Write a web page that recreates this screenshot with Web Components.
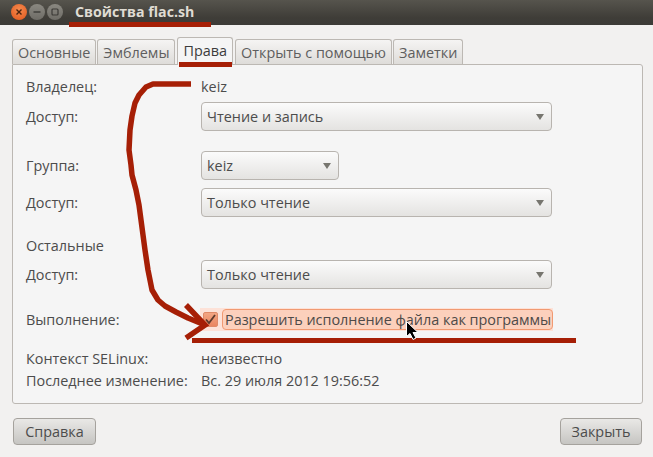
<!DOCTYPE html>
<html lang="ru">
<head>
<meta charset="utf-8">
<title>Свойства flac.sh</title>
<style>
  html, body { margin: 0; padding: 0; }
  body {
    background: #f2f1f0;
    color: #4c4c4c;
    font-family: 'Open Sans', 'Noto Sans', sans-serif;
    font-size: 14.4px;
    height: 457px;
    overflow: hidden;
    position: relative;
    width: 653px;
  }
</style>
</head>
<body>
<gtk-titlebar>Свойства flac.sh</gtk-titlebar>

<gtk-tabs>
  <gtk-tab>Основные</gtk-tab>
  <gtk-tab>Эмблемы</gtk-tab>
  <gtk-tab active>Права</gtk-tab>
  <gtk-tab>Открыть с помощью</gtk-tab>
  <gtk-tab>Заметки</gtk-tab>
</gtk-tabs>

<gtk-panel>
  <gtk-row label="Владелец:" height="22" style="margin-top:10px">keiz</gtk-row>
  <gtk-row label="Доступ:" height="29" style="margin-top:5px"><gtk-combo>Чтение и запись</gtk-combo></gtk-row>
  <gtk-row label="Группа:" height="29" style="margin-top:20px"><gtk-combo short>keiz</gtk-combo></gtk-row>
  <gtk-row label="Доступ:" height="29" style="margin-top:8px"><gtk-combo>Только чтение</gtk-combo></gtk-row>
  <gtk-row label="Остальные" height="22" style="margin-top:17px"></gtk-row>
  <gtk-row label="Доступ:" height="29" style="margin-top:4px"><gtk-combo>Только чтение</gtk-combo></gtk-row>
  <gtk-row label="Выполнение:" height="24" style="margin-top:18px"><gtk-check>Разрешить исполнение файла как программы</gtk-check></gtk-row>
  <gtk-row label="Контекст SELinux:" height="22" style="margin-top:16px">неизвестно</gtk-row>
  <gtk-row label="Последнее изменение:" height="22">Вс. 29 июля 2012 19:56:52</gtk-row>
</gtk-panel>

<gtk-actions>
  <gtk-button>Справка</gtk-button>
  <gtk-button style="width:82px">Закрыть</gtk-button>
</gtk-actions>

<gtk-scribble></gtk-scribble>

<script>
class GtkTitlebar extends HTMLElement {
  constructor() {
    super();
    this.attachShadow( {mode: 'open'} ).innerHTML = /* template */ `
      <style>
        :host {
          align-items: center;
          background: linear-gradient( #56544d, #3f3d38 70%, #3c3b37 );
          box-sizing: border-box;
          color: #dfdbd2;
          display: flex;
          font-family: 'Open Sans', 'Noto Sans', sans-serif;
          font-size: 14.2px;
          font-weight: 700;
          height: 25px;
          padding: 0 0 2px 11px;
        }
        .btn {
          align-items: center;
          border-radius: 50%;
          box-sizing: border-box;
          display: flex;
          height: 16px;
          justify-content: center;
          margin-right: 2px;
          width: 16px;
        }
        .close { background: radial-gradient( circle at 50% 35%, #f58a4e, #e0561c ); }
        .other { background: linear-gradient( #8a8881, #6e6c66 ); }
        .title { margin-left: 10px; }
      </style>
      <span class="btn close"><svg width="8" height="8"><path d="M1.5 1.5l5 5M6.5 1.5l-5 5" stroke="#4a2410" stroke-width="1.4"/></svg></span>
      <span class="btn other"><svg width="8" height="8"><path d="M0.5 4h7" stroke="#3c3b37" stroke-width="1.4"/></svg></span>
      <span class="btn other"><svg width="8" height="8"><rect x="1" y="1" width="6" height="6" rx="1" fill="none" stroke="#3c3b37" stroke-width="1.2"/></svg></span>
      <span class="title"><slot></slot></span>
    `;
  }
}

class GtkTabs extends HTMLElement {
  constructor() {
    super();
    this.attachShadow( {mode: 'open'} ).innerHTML = /* template */ `
      <style>
        :host {
          align-items: flex-end;
          display: flex;
          gap: 1px;
          height: 27px;
          margin: 12px 0 0 12px;
          position: relative;
          z-index: 1;
        }
      </style>
      <slot></slot>
    `;
  }
}

class GtkTab extends HTMLElement {
  constructor() {
    super();
    this.attachShadow( {mode: 'open'} ).innerHTML = /* template */ `
      <style>
        :host {
          align-items: center;
          background: linear-gradient( #f5f4f3, #dedcd9 );
          border: 1px solid #bcb8b3;
          border-bottom: 0;
          border-radius: 3px 3px 0 0;
          box-sizing: border-box;
          color: #5e5e5e;
          display: flex;
          height: 25px;
          padding: 0 5px;
          white-space: nowrap;
        }
        :host( [active] ) {
          background: #f5f5f5;
          color: #3c3c3c;
          height: 28px;
          margin: 0 1px;
          margin-bottom: -1px;
          padding: 0 5px 2px;
        }
      </style>
      <slot></slot>
    `;
  }
}

class GtkPanel extends HTMLElement {
  constructor() {
    super();
    this.attachShadow( {mode: 'open'} ).innerHTML = /* template */ `
      <style>
        :host {
          background: #f5f5f5;
          border: 1px solid #bcb8b3;
          border-radius: 0 3px 3px 3px;
          box-sizing: border-box;
          display: block;
          height: 340px;
          margin: 0 10px 0 12px;
          padding: 0 13px;
        }
      </style>
      <slot></slot>
    `;
  }
}

class GtkRow extends HTMLElement {
  constructor() {
    super();
    this.attachShadow( {mode: 'open'} ).innerHTML = /* template */ `
      <style>
        :host {
          align-items: center;
          color: #4c4c4c;
          display: grid;
          grid-template-columns: 175px 1fr;
        }
        .label { white-space: nowrap; }
      </style>
      <span class="label"></span>
      <div><slot></slot></div>
    `;
  }

  connectedCallback() {
    this.shadowRoot.querySelector( '.label' ).textContent = this.getAttribute( 'label' );
    this.style.height = this.getAttribute( 'height' ) + 'px';
  }
}

class GtkCombo extends HTMLElement {
  constructor() {
    super();
    this.attachShadow( {mode: 'open'} ).innerHTML = /* template */ `
      <style>
        :host {
          align-items: center;
          background: linear-gradient( #fbfbfb, #e4e3e1 );
          border: 1px solid #b8b4af;
          border-radius: 4px;
          box-sizing: border-box;
          display: flex;
          height: 29px;
          justify-content: space-between;
          padding: 0 7px 0 5px;
          width: 351px;
        }
        :host( [short] ) { width: 138px; }
        .arrow {
          border-left: 4.5px solid transparent;
          border-right: 4.5px solid transparent;
          border-top: 6px solid #77766f;
          height: 0;
          width: 0;
        }
      </style>
      <span><slot></slot></span>
      <span class="arrow"></span>
    `;
  }
}

class GtkCheck extends HTMLElement {
  constructor() {
    super();
    this.attachShadow( {mode: 'open'} ).innerHTML = /* template */ `
      <style>
        :host {
          align-items: center;
          background: #fde2d8;
          display: flex;
          height: 23px;
          margin-left: -1px;
          width: 353px;
        }
        .box {
          align-items: center;
          background: linear-gradient( #f3a684, #ea8660 );
          border: 1px solid #e08a68;
          border-radius: 2px;
          box-sizing: border-box;
          display: flex;
          height: 15px;
          justify-content: center;
          margin: 0 4px 0 3px;
          width: 15px;
        }
        .text {
          background: #fcd0bc;
          border: 1px solid #f19a72;
          border-radius: 4px;
          box-sizing: border-box;
          color: #4e4a48;
          height: 21px;
          line-height: 19px;
          padding-left: 2px;
          white-space: nowrap;
          width: 331px;
        }
      </style>
      <span class="box"><svg width="11" height="11"><path d="M1 5.500l3 3.500 6-8" fill="none" stroke="#5c3a2c" stroke-width="1.8"/></svg></span>
      <span class="text"><slot></slot></span>
    `;
  }
}

class GtkActions extends HTMLElement {
  constructor() {
    super();
    this.attachShadow( {mode: 'open'} ).innerHTML = /* template */ `
      <style>
        :host {
          display: flex;
          justify-content: space-between;
          margin: 14px 11px 0 13px;
        }
      </style>
      <slot></slot>
    `;
  }
}

class GtkButton extends HTMLElement {
  constructor() {
    super();
    this.attachShadow( {mode: 'open'} ).innerHTML = /* template */ `
      <style>
        :host {
          align-items: center;
          background: linear-gradient( #e9e8e6, #c6c5c2 );
          border: 1px solid #a5a29d;
          border-radius: 4px;
          box-sizing: border-box;
          color: #4c4c4c;
          display: flex;
          height: 27px;
          justify-content: center;
          width: 83px;
        }
      </style>
      <slot></slot>
    `;
  }
}

class GtkScribble extends HTMLElement {
  constructor() {
    super();
    this.attachShadow( {mode: 'open'} ).innerHTML = /* template */ `
      <style>
        :host {
          display: block;
          height: 457px;
          left: 0;
          pointer-events: none;
          position: absolute;
          top: 0;
          width: 653px;
          z-index: 2;
        }
      </style>
      <svg width="653" height="457" fill="none" stroke="#a61f06" stroke-width="5">
        <path d="M69 24.500H211M179 64.500H232M192 340.500H576"/>
        <path stroke-width="5.500" stroke-linejoin="round" d="M191 84H153L146 87 139 95 135 103 132 116 130 130 129 150 131 165 132 175 136 190 139 205 141 220 143 235 145 250 148 270 152 290 158 300 165 306 176 312 188 318 205 325"/>
        <path stroke-width="5.500" d="M186 305L205 325 186 338"/>
        <path fill="#000" stroke="#fff" stroke-width="1" d="M406.500 321.500V336.500L410 333.500 413 339.500 416 338 413 332.500H418Z"/>
      </svg>
    `;
  }
}

window.customElements.define( 'gtk-titlebar', GtkTitlebar );
window.customElements.define( 'gtk-tabs', GtkTabs );
window.customElements.define( 'gtk-tab', GtkTab );
window.customElements.define( 'gtk-panel', GtkPanel );
window.customElements.define( 'gtk-row', GtkRow );
window.customElements.define( 'gtk-combo', GtkCombo );
window.customElements.define( 'gtk-check', GtkCheck );
window.customElements.define( 'gtk-actions', GtkActions );
window.customElements.define( 'gtk-button', GtkButton );
window.customElements.define( 'gtk-scribble', GtkScribble );
</script>
</body>
</html>
